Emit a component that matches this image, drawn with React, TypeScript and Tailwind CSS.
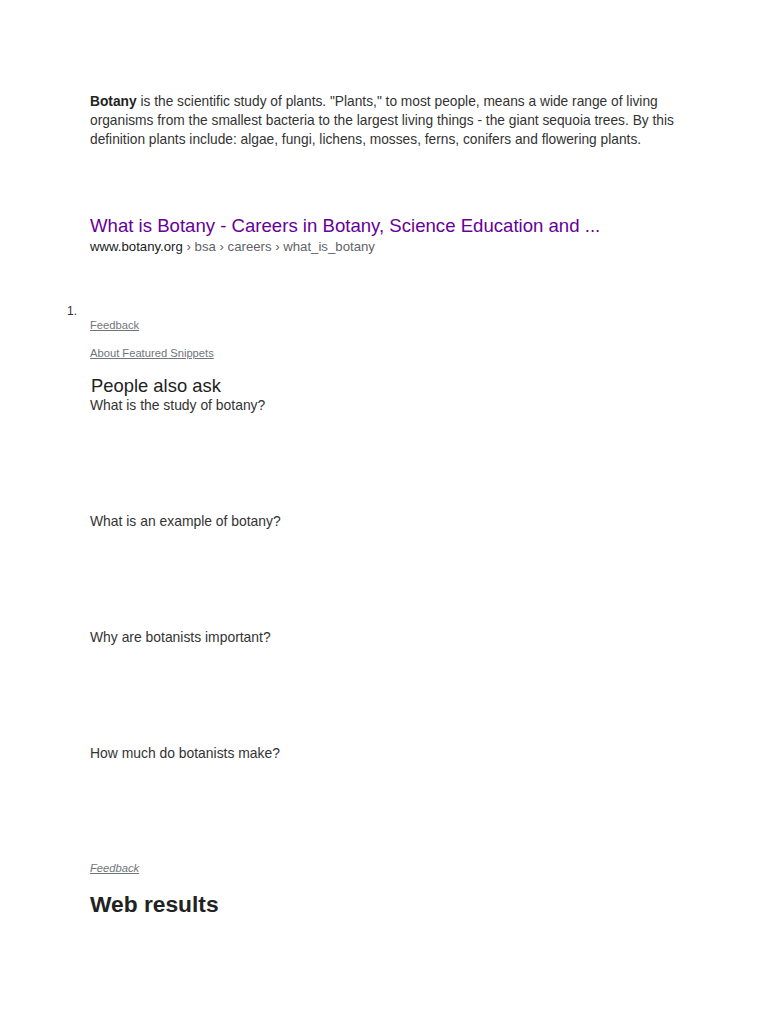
export default function App() {
  const questions = [
    'What is the study of botany?',
    'What is an example of botany?',
    'Why are botanists important?',
    'How much do botanists make?',
  ];

  return (
    <div className="min-h-[1024px] bg-white font-['Liberation_Sans',Arial,sans-serif] text-[#222]">
      <div className="pl-[90px] pr-[90px] pt-[92px]">
        <p className="text-[13.75px] leading-[19px] text-[#333] max-w-[592px]">
          <b className="text-[#222]">Botany</b> is the scientific study of plants. "Plants," to most
          people, means a wide range of living organisms from the smallest bacteria to the largest
          living things - the giant sequoia trees. By this definition plants include: algae, fungi,
          lichens, mosses, ferns, conifers and flowering plants.
        </p>

        <a className="mt-[66px] block text-[18.6px] leading-[22px] text-[#660099]">
          What is Botany - Careers in Botany, Science Education and ...
        </a>
        <div className="mt-[2px] text-[13.2px] leading-[16px] text-[#5f6368]">
          <span className="text-[#202124]">www.botany.org</span> › bsa › careers › what_is_botany
        </div>
      </div>

      <div className="pl-[67px] mt-[49px] text-[12px] leading-[14px] text-[#333]">1.</div>

      <div className="pl-[90px]">
        <a className="block text-[11.2px] leading-[14px] text-[#70757a] underline">Feedback</a>
        <a className="mt-[14px] block text-[11.2px] leading-[14px] text-[#70757a] underline">
          About Featured Snippets
        </a>

        <h2 className="mt-[15px] pl-[1px] text-[18.4px] leading-[22px] text-[#222]">People also ask</h2>
        <div className="flex flex-col">
          {questions.map((q) => (
            <div key={q} className="h-[116px] last:h-[16px] text-[13.9px] leading-[16px] text-[#333]">
              {q}
            </div>
          ))}
        </div>

        <a className="mt-[100px] block text-[11.2px] leading-[14px] italic text-[#70757a] underline">
          Feedback
        </a>
        <h2 className="mt-[15px] text-[22.75px] leading-[28px] font-bold text-[#222]">Web results</h2>
      </div>
    </div>
  );
}
